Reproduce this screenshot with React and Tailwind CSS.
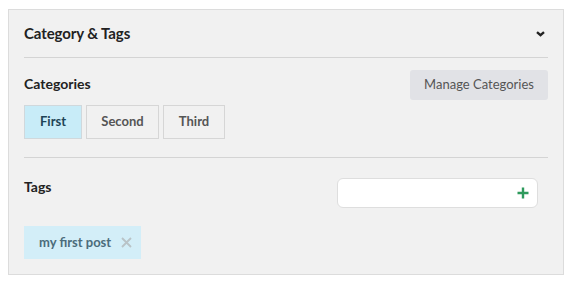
export default function App() {
  return (
    <div className="w-[576px] h-[285px] bg-white pt-[9px] pl-[8px]" style={{ fontFamily: 'Lato, "Noto Sans", sans-serif' }}>
      <div className="w-[556px] h-[266px] bg-[#f1f1f1] border border-[#dcdcdc] px-[15px]">
        <div className="h-[48px] flex items-center justify-between border-b border-[#d4d4d4]">
          <span className="text-[15px] font-bold text-[#222] tracking-[-0.1px]">Category &amp; Tags</span>
          <svg width="9" height="6" viewBox="0 0 9 6" className="mr-[3px] mt-[1px]">
            <path d="M1 1.2 L4.5 4.2 L8 1.2" stroke="#222" strokeWidth="2.4" fill="none" />
          </svg>
        </div>
        <div className="h-[100px] border-b border-[#d4d4d4] pt-[12px]">
          <div className="flex items-center justify-between h-[30px]">
            <span className="text-[14px] font-bold text-[#222] mt-[-3px]">Categories</span>
            <button className="h-[30px] w-[138px] rounded-[3px] bg-[#e1e2e6] text-[13px] text-[#555]">Manage Categories</button>
          </div>
          <div className="flex gap-[4px] mt-[5px]">
            <button className="h-[34px] w-[58px] border border-[#d0d8dc] bg-[#c8ecf8] text-[13px] font-bold text-[#1e4456]">First</button>
            <button className="h-[34px] w-[73px] border border-[#d6d6d6] bg-[#f1f1f1] text-[13px] font-bold text-[#555]">Second</button>
            <button className="h-[34px] w-[62px] border border-[#d6d6d6] bg-[#f1f1f1] text-[13px] font-bold text-[#555]">Third</button>
          </div>
        </div>
        <div className="pt-[20px]">
          <div className="flex items-start justify-between pr-[10px]">
            <span className="text-[14px] font-bold text-[#222] leading-[20px] mt-[-1px]">Tags</span>
            <div className="h-[30px] w-[201px] bg-white border border-[#dedede] rounded-[6px] flex items-center justify-end pr-[8px]">
              <svg width="12" height="12" viewBox="0 0 12 12">
                <path d="M6 0.5 V11.5 M0.5 6 H11.5" stroke="#2e9a5c" strokeWidth="2.4" />
              </svg>
            </div>
          </div>
          <div className="mt-[18px] inline-flex items-center h-[33px] w-[117px] bg-[#d3eef8] pl-[15px]">
            <span className="text-[13px] font-bold text-[#4b6c7b]">my first post</span>
            <svg width="11" height="11" viewBox="0 0 11 11" className="ml-[10px]">
              <path d="M1 1 L10 10 M10 1 L1 10" stroke="#b9c3c7" strokeWidth="1.8" />
            </svg>
          </div>
        </div>
      </div>
    </div>
  );
}
